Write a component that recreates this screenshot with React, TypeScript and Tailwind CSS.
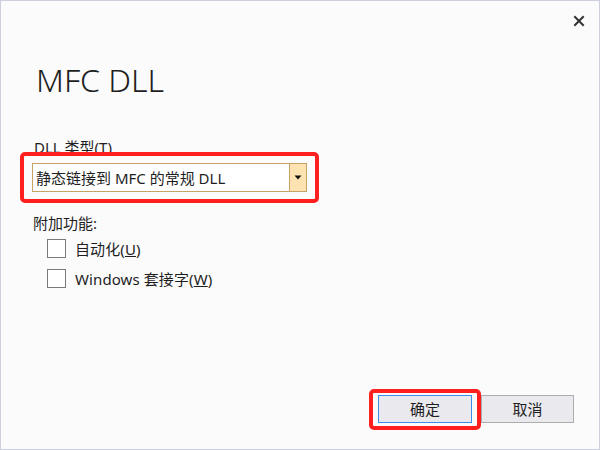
import { useState } from 'react'

const FONT = "font-['Noto_Sans','Noto_Sans_CJK_SC',sans-serif]"

function CloseIcon() {
  return (
    <svg width="12" height="12" viewBox="0 0 12 12" fill="none">
      <path d="M2 2L10 10M10 2L2 10" stroke="#333" strokeWidth="2" strokeLinecap="square" />
    </svg>
  )
}

function Checkbox({ checked, onChange, label, hotkey }: {
  checked: boolean
  onChange: () => void
  label: string
  hotkey: string
}) {
  return (
    <label className="flex items-center h-[19px] cursor-default" onClick={onChange}>
      <span className="w-[19px] h-[19px] border border-[#7a7a7a] bg-white flex items-center justify-center shrink-0">
        {checked && (
          <svg width="12" height="10" viewBox="0 0 12 10" fill="none">
            <path d="M1 5L4.5 8.5L11 1" stroke="#222" strokeWidth="1.6" />
          </svg>
        )}
      </span>
      <span className="ml-[9px] text-[15px] leading-[20px] whitespace-nowrap tracking-[0.1px]">
        {label}(<u>{hotkey}</u>)
      </span>
    </label>
  )
}

export default function App() {
  const [automation, setAutomation] = useState(false)
  const [sockets, setSockets] = useState(false)

  return (
    <div className={`w-[600px] h-[450px] border border-[#cbcfe0] bg-[#fbfbfc] text-[#1e1e1e] flex flex-col ${FONT}`}>
      {/* close */}
      <div className="flex justify-end pt-[14px] pr-[14px]">
        <button className="w-[12px] h-[12px] flex items-center justify-center">
          <CloseIcon />
        </button>
      </div>

      <div className="flex flex-col pl-[31px] flex-1">
        <h1 className="mt-[37px] ml-[4px] text-[32px] leading-[32px] font-light whitespace-nowrap">MFC DLL</h1>

        <p className="mt-[41px] ml-[2px] text-[15px] leading-[20px]">
          DLL 类型(<u>T</u>)
        </p>

        {/* combobox, with highlight */}
        <div className="relative mt-[6px] w-[275px] h-[29px]">
          <div className="w-full h-full flex border border-[#c9a265] bg-white">
            <div className="flex-1 flex items-center pl-[3px] text-[15px] leading-[20px] whitespace-nowrap">
              静态链接到 MFC 的常规 DLL
            </div>
            <div className="w-[17px] border-l border-[#c9a265] bg-[#fde3b2] flex items-center justify-center">
              <svg width="8" height="5" viewBox="0 0 8 5">
                <path d="M0.5 0.5H7.5L4 4.5Z" fill="#111" />
              </svg>
            </div>
          </div>
          <div className="absolute -left-[12px] -right-[12px] -top-[11px] -bottom-[11px] border-4 border-[#ff1f1f] rounded-[5px] pointer-events-none" />
        </div>

        <p className="mt-[21px] ml-[1px] text-[15px] leading-[20px]">附加功能:</p>

        <div className="flex flex-col gap-[11px] mt-[6px] ml-[15px]">
          <Checkbox checked={automation} onChange={() => setAutomation((v) => !v)} label="自动化" hotkey="U" />
          <Checkbox checked={sockets} onChange={() => setSockets((v) => !v)} label="Windows 套接字" hotkey="W" />
        </div>
      </div>

      {/* buttons */}
      <div className="flex justify-end gap-[9px] pr-[25px] pb-[26px]">
        <div className="relative">
          <button className="w-[94px] h-[28px] border border-[#3c8ee8] bg-[#e9e9ee] text-[15px] leading-[20px]">
            确定
          </button>
          <div className="absolute -left-[9px] -right-[9px] -top-[6px] -bottom-[7px] border-4 border-[#ff1f1f] rounded-[5px] pointer-events-none" />
        </div>
        <button className="w-[93px] h-[28px] border border-[#adadad] bg-[#e9e9ee] text-[15px] leading-[20px]">
          取消
        </button>
      </div>
    </div>
  )
}
